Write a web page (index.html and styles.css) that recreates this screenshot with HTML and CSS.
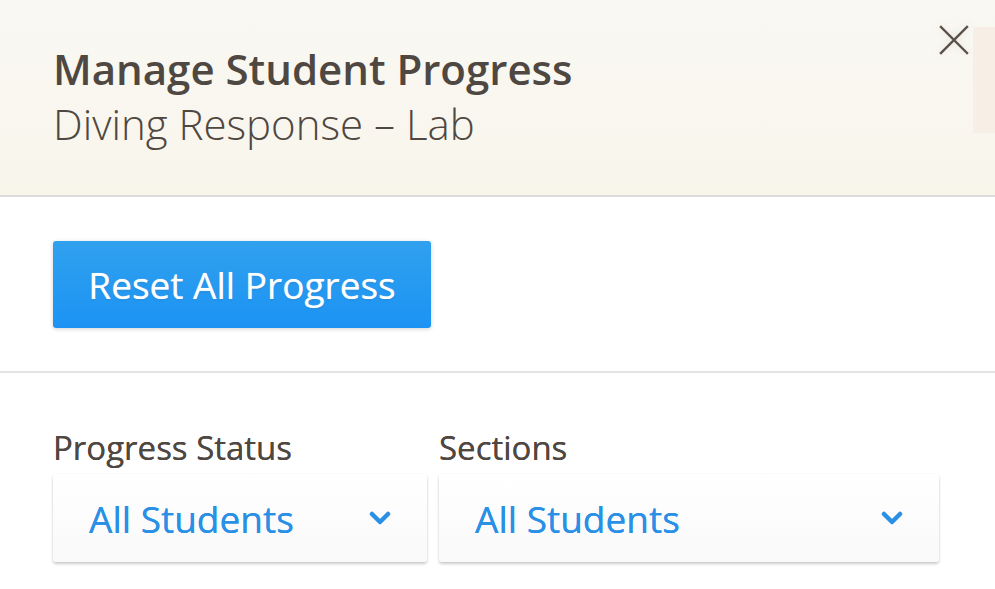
FILE: index.html
```html
<!DOCTYPE html>
<html>
<head>
  <meta name="viewport" content="width=device-width, initial-scale=1.0">
  <link rel="stylesheet" href="styles.css">
</head>

<body>
  <header class="modal-head">
    <h1 class="title">Manage Student Progress</h1>
    <h2 class="subtitle">Diving Response &ndash; Lab</h2>
    <button class="close" aria-label="Close">
      <svg width="30" height="30" viewBox="0 0 30 30">
        <path d="M2 2 L28 28 M28 2 L2 28" stroke="#5b5048" stroke-width="2.4" stroke-linecap="square" fill="none"/>
      </svg>
    </button>
    <div class="side-tab"></div>
  </header>

  <section class="reset-row">
    <button class="btn-primary">Reset All Progress</button>
  </section>

  <section class="filters">
    <div class="filter">
      <label class="filter-label">Progress Status</label>
      <div class="select narrow">
        <span>All Students</span>
        <svg class="chevron" width="22" height="14" viewBox="0 0 22 14">
          <polyline points="3,3 11,11 19,3" stroke="#2a90e6" stroke-width="4.5" stroke-linecap="round" stroke-linejoin="round" fill="none"/>
        </svg>
      </div>
    </div>
    <div class="filter">
      <label class="filter-label">Sections</label>
      <div class="select wide">
        <span>All Students</span>
        <svg class="chevron" width="22" height="14" viewBox="0 0 22 14">
          <polyline points="3,3 11,11 19,3" stroke="#2a90e6" stroke-width="4.5" stroke-linecap="round" stroke-linejoin="round" fill="none"/>
        </svg>
      </div>
    </div>
  </section>
</body>
</html>
```

FILE: styles.css
```css
body {
  margin: 0;
  background-color: #fff;
  font-family: "Open Sans", "Liberation Sans", sans-serif;
  color: #4f4741;
  overflow: hidden;
}

.modal-head {
  position: relative;
  height: 195px;
  padding: 0 53px;
  background: linear-gradient(to bottom, #f9f8f3, #f8f5eb);
  border-bottom: 2px solid #dcdcda;
}

.title {
  margin: 0;
  padding-top: 41px;
  font-size: 42px;
  font-weight: 600;
  line-height: 55px;
  color: #4f4741;
}

.subtitle {
  margin: 0;
  font-size: 42px;
  font-weight: 300;
  line-height: 55px;
  color: #4f4741;
}

.close {
  position: absolute;
  top: 25px;
  left: 939px;
  width: 30px;
  height: 30px;
  padding: 0;
  border: 0;
  background: transparent;
  filter: drop-shadow(0 0 4px rgba(90, 80, 60, 0.15));
}

.side-tab {
  position: absolute;
  top: 27px;
  left: 973px;
  width: 30px;
  height: 106px;
  background-color: #f7eee5;
}

.reset-row {
  padding: 44px 53px 43px;
  border-bottom: 2px solid #e4e4e4;
}

.btn-primary {
  display: block;
  width: 378px;
  height: 87px;
  padding: 0;
  border: 0;
  border-radius: 3px;
  background: linear-gradient(to bottom, #30a1ee, #1c93f4);
  box-shadow: 0 1px 4px rgba(0, 0, 0, 0.18);
  color: #fff;
  font-family: "Open Sans", "Liberation Sans", sans-serif;
  font-size: 37px;
  font-weight: 400;
  text-shadow: 0 0 1px rgba(255, 255, 255, 0.6), 0 1px 2px rgba(0, 0, 0, 0.12);
}

.filters {
  display: flex;
  gap: 12px;
  padding: 55px 53px 30px;
}

.filter-label {
  display: block;
  font-size: 33px;
  font-weight: 400;
  line-height: 40px;
  margin-bottom: 6px;
  color: #4f4741;
  text-shadow: 0 0 0.6px #4f4741;
}

.select {
  display: flex;
  align-items: center;
  justify-content: space-between;
  height: 88px;
  padding: 0 36px;
  box-sizing: border-box;
  border-radius: 3px;
  background: linear-gradient(to bottom, #fff, #f9f9f9);
  box-shadow: 0 2px 3px rgba(0, 0, 0, 0.2), 0 0 1px rgba(0, 0, 0, 0.12);
  color: #2a90e6;
  font-size: 37px;
  text-shadow: 0 0 0.5px #2a90e6;
}

.select.narrow {
  width: 374px;
}

.select.wide {
  width: 500px;
}
```
